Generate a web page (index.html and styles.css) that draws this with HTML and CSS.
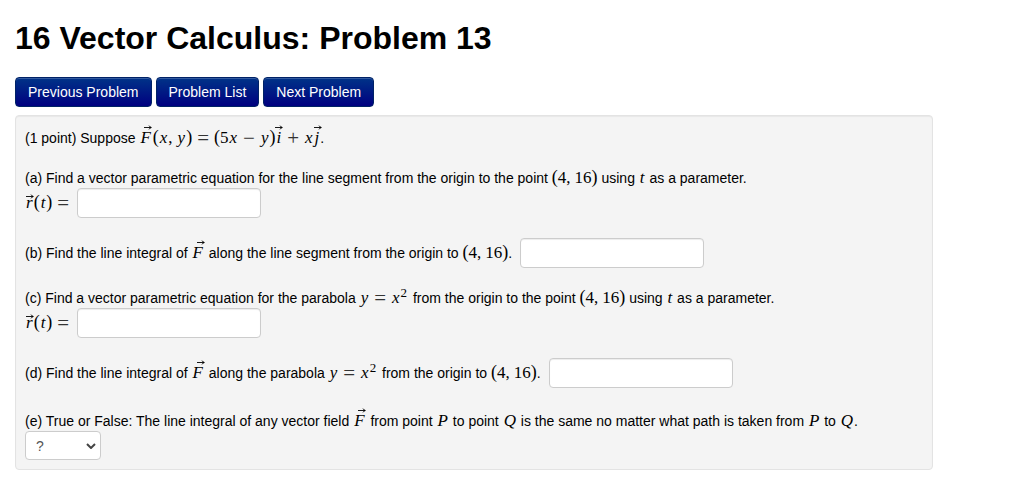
FILE: index.html
```html
<!DOCTYPE html>
<html lang="en">
<head>
<meta charset="utf-8">
<title>16 Vector Calculus: Problem 13</title>
<link rel="stylesheet" href="styles.css">
</head>
<body>
<svg class="defs" aria-hidden="true"><symbol id="arrow" viewBox="0 0 8 5"><path d="M0 2.5H7M5 .6Q5.7 2.1 7.4 2.5Q5.7 2.9 5 4.4" fill="none" stroke="currentColor" stroke-width=".9"/></symbol></svg>
<main class="page">
<h1 class="title">16 Vector Calculus: Problem 13</h1>
<nav class="nav">
<button class="btn" type="button">Previous Problem</button>
<button class="btn" type="button">Problem List</button>
<button class="btn" type="button">Next Problem</button>
</nav>
<form class="problem">
<div class="part">
<p class="line tall">(1 point) Suppose <span class="math"><span class="vec cap"><i>F</i><svg class="arrow"><use href="#arrow"/></svg></span><b>(</b><i>x</i><span class="comma">,</span><i>y</i><b>)</b><span class="op">=</span><b>(</b>5<i>x</i><span class="op">−</span><i>y</i><b>)</b><span class="vec tip"><i>i</i><svg class="arrow"><use href="#arrow"/></svg></span><span class="op">+</span><i>x</i><span class="vec tip"><i>j</i><svg class="arrow"><use href="#arrow"/></svg></span></span>.</p>
</div>
<div class="part">
<p class="line">(a) Find a vector parametric equation for the line segment from the origin to the point <span class="math"><b>(</b>4<span class="comma">,</span>16<b>)</b></span> using <span class="math"><i>t</i></span> as a parameter.</p>
<div class="row"><label for="a"><span class="math"><span class="vec"><i>r</i><svg class="arrow"><use href="#arrow"/></svg></span><b>(</b><i>t</i><b>)</b><span class="op">=</span></span></label><input class="answer" id="a" type="text"></div>
</div>
<div class="part">
<div class="row"><label for="b">(b) Find the line integral of <span class="math"><span class="vec cap"><i>F</i><svg class="arrow"><use href="#arrow"/></svg></span></span> along the line segment from the origin to <span class="math"><b>(</b>4<span class="comma">,</span>16<b>)</b></span>.</label><input class="answer" id="b" type="text"></div>
</div>
<div class="part">
<p class="line">(c) Find a vector parametric equation for the parabola <span class="math"><i>y</i><span class="op">=</span><i>x</i><sup>2</sup></span> from the origin to the point <span class="math"><b>(</b>4<span class="comma">,</span>16<b>)</b></span> using <span class="math"><i>t</i></span> as a parameter.</p>
<div class="row"><label for="c"><span class="math"><span class="vec"><i>r</i><svg class="arrow"><use href="#arrow"/></svg></span><b>(</b><i>t</i><b>)</b><span class="op">=</span></span></label><input class="answer" id="c" type="text"></div>
</div>
<div class="part">
<div class="row"><label for="d">(d) Find the line integral of <span class="math"><span class="vec cap"><i>F</i><svg class="arrow"><use href="#arrow"/></svg></span></span> along the parabola <span class="math"><i>y</i><span class="op">=</span><i>x</i><sup>2</sup></span> from the origin to <span class="math"><b>(</b>4<span class="comma">,</span>16<b>)</b></span>.</label><input class="answer" id="d" type="text"></div>
</div>
<div class="part">
<label class="line tall" for="e">(e) True or False: The line integral of any vector field <span class="math"><span class="vec cap"><i>F</i><svg class="arrow"><use href="#arrow"/></svg></span></span> from point <span class="math"><i>P</i></span> to point <span class="math"><i>Q</i></span> is the same no matter what path is taken from <span class="math"><i>P</i></span> to <span class="math"><i>Q</i></span>.</label>
<div class="select"><select id="e"><option>?</option><option>True</option><option>False</option></select><svg class="chevron" viewBox="0 0 10 6"><path d="M1 1L5 5L9 1" fill="none" stroke="currentColor" stroke-width="2"/></svg></div>
</div>
</form>
</main>
</body>
</html>
```
FILE: styles.css
```css
body { margin: 0; background: #fff; color: #000; font: 14px/20px "Liberation Sans", Arial, sans-serif; }
.defs { position: absolute; width: 0; height: 0; }
.page { padding: 18px 86px 17px 15px; }
.title { margin: 0 0 19px; font-size: 32px; line-height: 40px; }
.nav { display: flex; gap: 4px; margin-bottom: 8px; }
.btn { padding: 4px 12px; border: 1px solid #002266; border-radius: 4px; background: linear-gradient(#003388, #000080); box-shadow: inset 0 1px 0 rgba(255, 255, 255, .2); color: #fff; font: inherit; }
.problem { display: flex; flex-direction: column; gap: 20px; padding: 9px; border: 1px solid #e3e3e3; border-radius: 4px; background: #f4f4f4; box-shadow: inset 0 1px 1px rgba(0, 0, 0, .05); }
.line { display: block; margin: 0; }
.tall { padding-top: 3px; }
.row { display: flex; align-items: center; gap: 8px; }
.answer { box-sizing: border-box; width: 184px; height: 30px; padding: 4px 6px; border: 1px solid #ccc; border-radius: 4px; background: #fff; box-shadow: inset 0 1px 1px rgba(0, 0, 0, .075); font: inherit; }
.math { font: 17px/0 "Liberation Serif", "Times New Roman", serif; white-space: nowrap; }
.math i { margin: 0 1px; }
.math b { font-weight: normal; font-size: 18px; }
.math sup { margin-right: 2px; font-size: 13px; vertical-align: 6px; line-height: 0; }
.comma { margin-right: 4px; }
.op { margin: 0 5px; font-size: 21px; vertical-align: -2px; color: #333; }
.op:last-child { margin-right: 0; }
.vec { position: relative; display: inline-block; line-height: 0; }
.cap { margin-right: 1px; }
.arrow { position: absolute; left: 1px; top: -9px; width: 8px; height: 5px; }
.cap .arrow { left: 5px; top: -13px; }
.tip .arrow { left: 0; top: -13px; }
.select { position: relative; width: 76px; }
.select select { appearance: none; display: block; box-sizing: border-box; width: 100%; height: 29px; padding: 4px 10px; border: 1px solid #ccc; border-radius: 4px; background: #fff; color: #555; font: inherit; }
.chevron { position: absolute; right: 5px; top: 12px; width: 10px; height: 6px; color: #444; pointer-events: none; }
```
